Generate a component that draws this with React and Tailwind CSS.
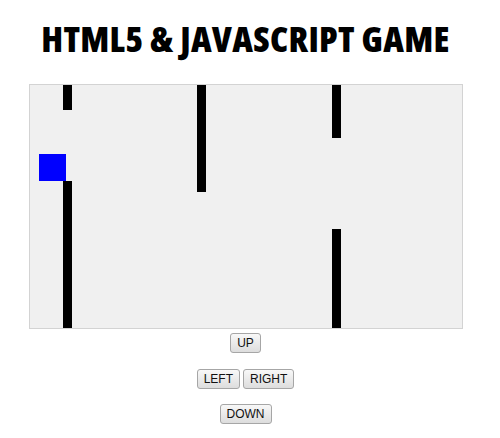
import { useState } from 'react'

// game field: bars are [x, y, w, h] inside the 432x243 board
const WALLS = [
  [33, 0, 9, 25],
  [33, 96, 9, 147],
  [167, 0, 9, 107],
  [302, 0, 9, 53],
  [302, 144, 9, 99],
]

function Board({ player }) {
  return (
    <div className="w-[434px] h-[245px] border border-[#d3d3d3] bg-[#f0f0f0]">
      <svg width="432" height="243" className="block">
        {WALLS.map(([x, y, w, h], i) => (
          <rect key={i} x={x} y={y} width={w} height={h} fill="#000" />
        ))}
        <rect x={player.x} y={player.y} width="27" height="27" fill="#0000ff" />
      </svg>
    </div>
  )
}

function Btn({ children, onClick }) {
  return (
    <button
      onClick={onClick}
      className="h-[20px] px-[6px] border border-[#a6a6a6] rounded-[3px] bg-gradient-to-b from-[#f8f8f8] to-[#dddddd] text-[12px] leading-[14px] text-[#111] font-['Liberation_Sans'] hover:from-[#fdfdfd] hover:to-[#e6e6e6]"
    >
      {children}
    </button>
  )
}

export default function App() {
  const [player, setPlayer] = useState({ x: 9, y: 69 })
  const move = (dx, dy) => setPlayer((p) => ({ x: p.x + dx, y: p.y + dy }))

  return (
    <div className="w-[491px] h-[438px] bg-white flex flex-col items-center">
      <h1 className="mt-[21px] h-[35px] whitespace-nowrap text-[36px] leading-[35px] font-extrabold text-black font-['Open_Sans'] font-stretch-[75%] tracking-[0.3px]">
        HTML5 &amp; JAVASCRIPT GAME
      </h1>
      <div className="mt-[28px]">
        <Board player={player} />
      </div>
      <div className="mt-[4px] flex">
        <Btn onClick={() => move(0, -1)}>UP</Btn>
      </div>
      <div className="mt-[16px] flex gap-[3px]">
        <Btn onClick={() => move(-1, 0)}>LEFT</Btn>
        <Btn onClick={() => move(1, 0)}>RIGHT</Btn>
      </div>
      <div className="mt-[15px] flex">
        <Btn onClick={() => move(0, 1)}>DOWN</Btn>
      </div>
    </div>
  )
}
